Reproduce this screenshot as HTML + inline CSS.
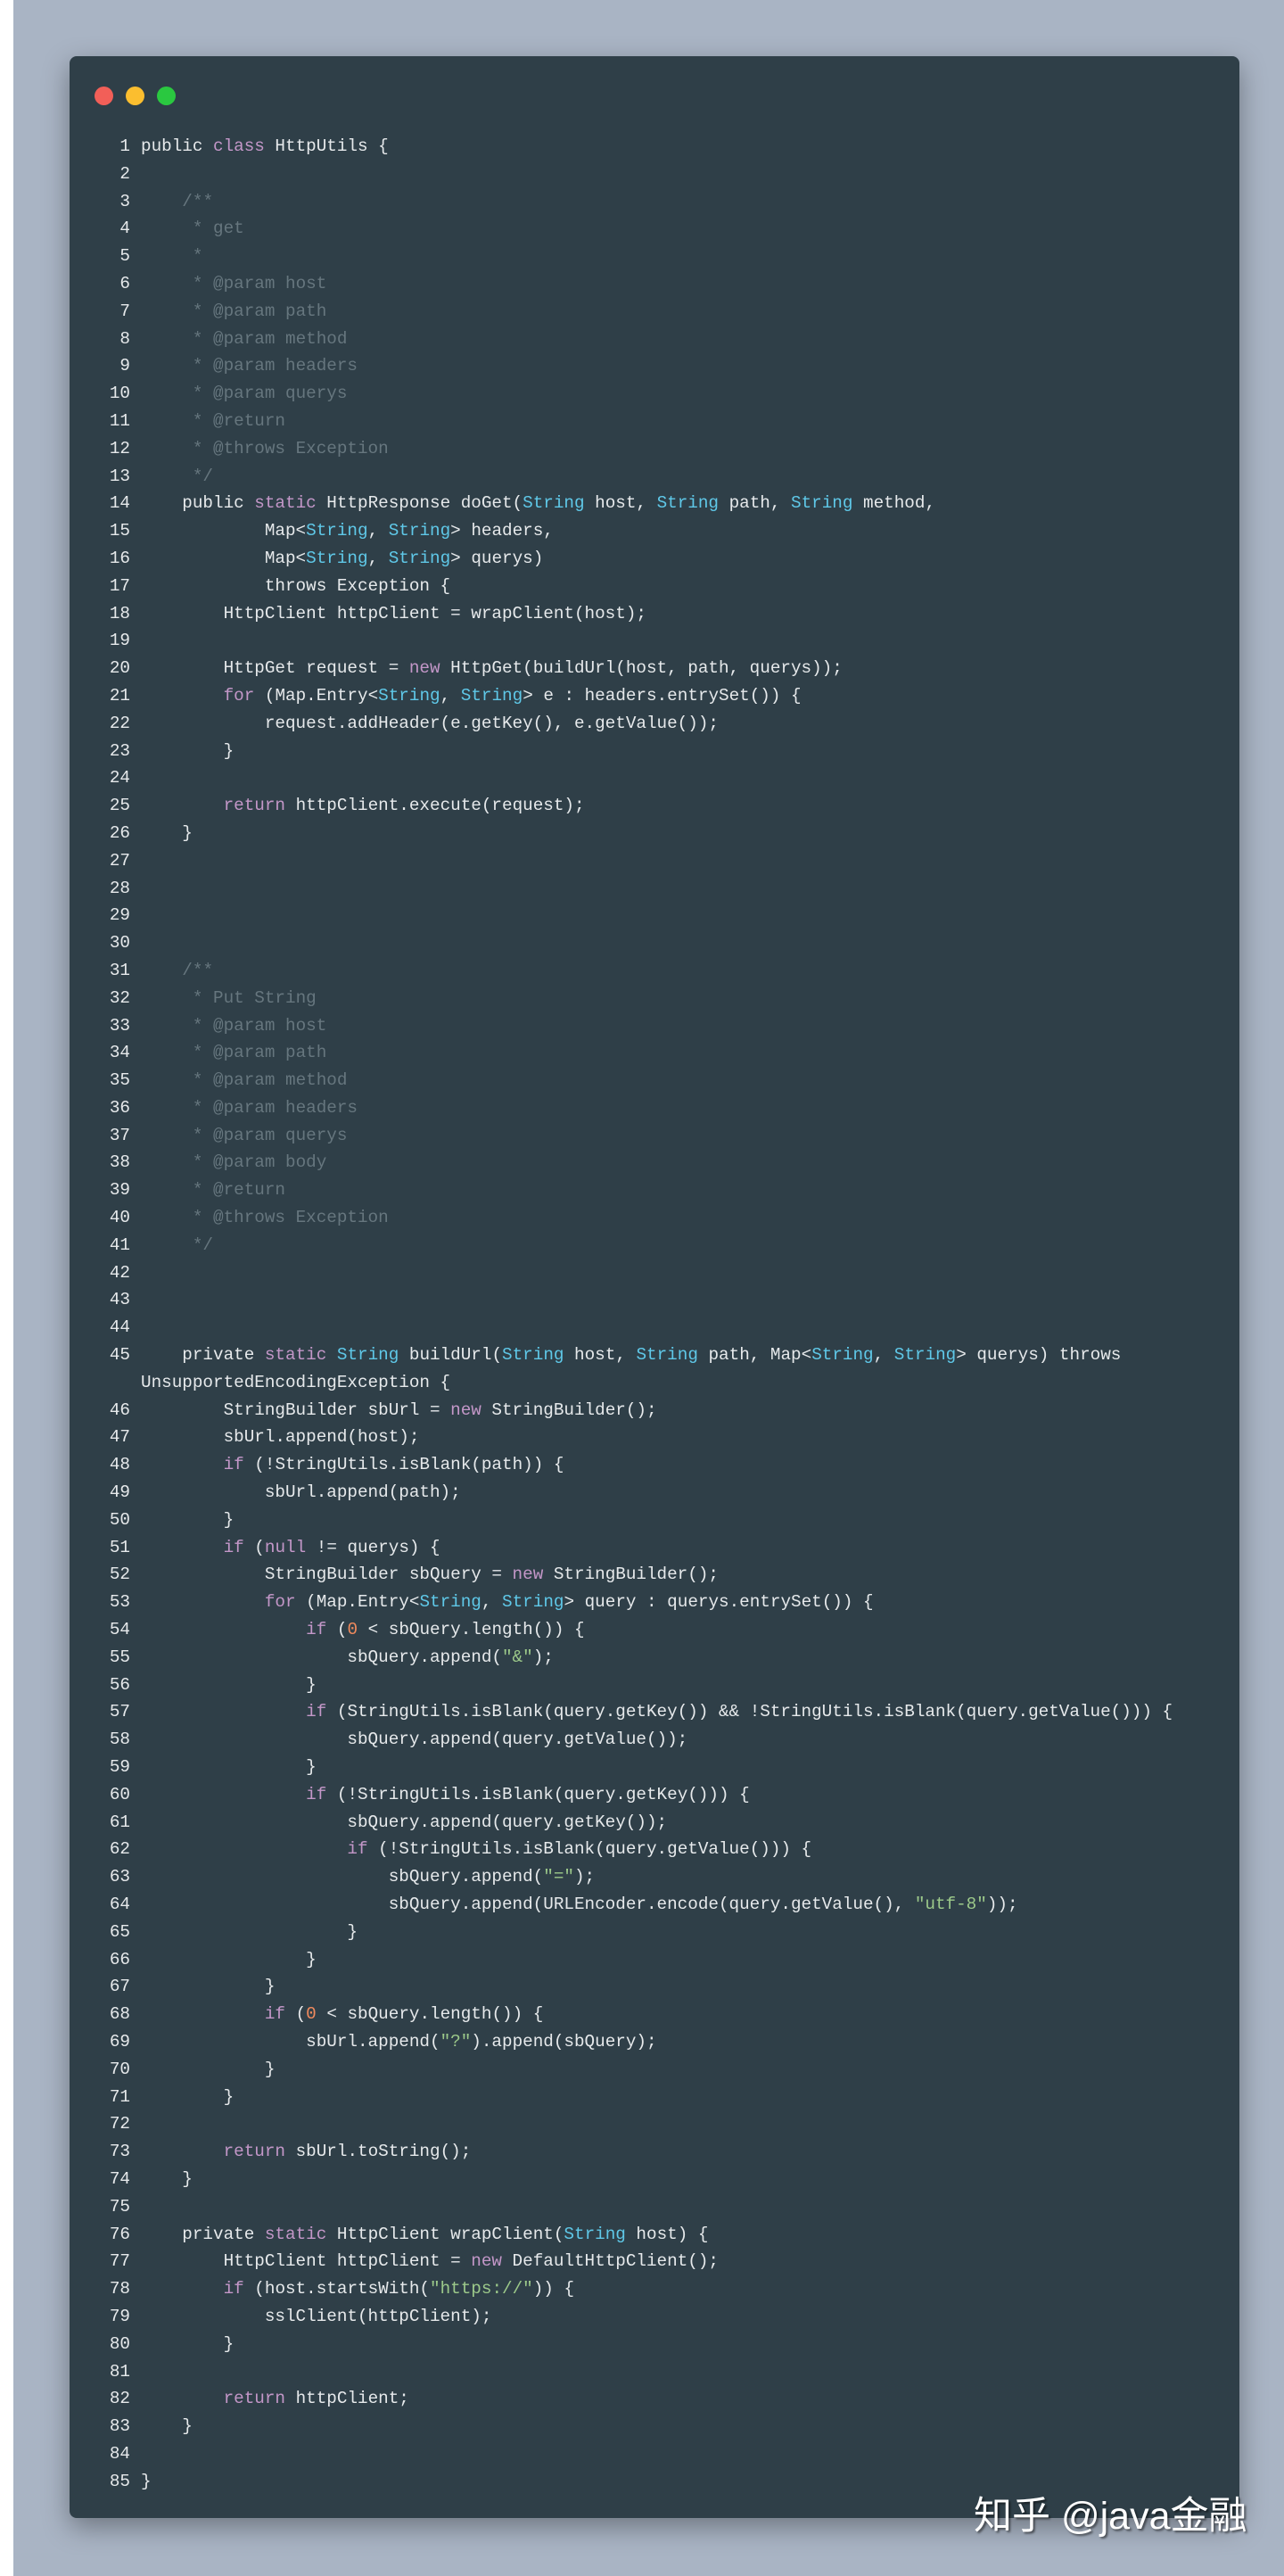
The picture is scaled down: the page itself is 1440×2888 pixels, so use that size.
<!DOCTYPE html>
<html><head><meta charset="utf-8"><style>
html,body{margin:0;padding:0}
body{width:1440px;height:2888px;background:#a9b4c4;position:relative;overflow:hidden}
.strip{position:absolute;left:0;top:0;width:15px;height:2888px;background:#fff}
.card{position:absolute;left:78px;top:63px;width:1312px;height:2760px;background:#2f3f48;border-radius:8px;box-shadow:0 10px 30px rgba(0,0,0,.35)}
.dot{position:absolute;top:97px;width:21px;height:21px;border-radius:50%}
pre{position:absolute;left:100px;top:149px;margin:0;font-family:"Liberation Mono",monospace;font-size:19.3px;line-height:30.8px;color:#e6e9eb;white-space:pre}
.n{display:inline-block;width:46px;text-align:right;margin-right:12px;color:#e6e9eb}
.k{color:#c397c8}.t{color:#5fc8e8}.c{color:#66767e}.s{color:#9cc98a}.m{color:#f08a5d}
.wm{position:absolute;left:1092px;top:2786px;font-family:"Liberation Sans","Noto Sans CJK SC",sans-serif;font-size:43px;color:#fff;text-shadow:2px 2px 2px rgba(0,0,0,.5)}
</style></head><body>
<div class="strip"></div>
<div class="card"></div>
<div class="dot" style="left:106px;background:#f25f58"></div>
<div class="dot" style="left:141px;background:#fbbe2f"></div>
<div class="dot" style="left:176px;background:#2ac840"></div>
<pre><span class="n">1</span>public <span class="k">class</span> HttpUtils {
<span class="n">2</span>
<span class="n">3</span>    <span class="c">/**</span>
<span class="n">4</span>     <span class="c">* get</span>
<span class="n">5</span>     <span class="c">*</span>
<span class="n">6</span>     <span class="c">* @param host</span>
<span class="n">7</span>     <span class="c">* @param path</span>
<span class="n">8</span>     <span class="c">* @param method</span>
<span class="n">9</span>     <span class="c">* @param headers</span>
<span class="n">10</span>     <span class="c">* @param querys</span>
<span class="n">11</span>     <span class="c">* @return</span>
<span class="n">12</span>     <span class="c">* @throws Exception</span>
<span class="n">13</span>     <span class="c">*/</span>
<span class="n">14</span>    public <span class="k">static</span> HttpResponse doGet(<span class="t">String</span> host, <span class="t">String</span> path, <span class="t">String</span> method,
<span class="n">15</span>            Map&lt;<span class="t">String</span>, <span class="t">String</span>&gt; headers,
<span class="n">16</span>            Map&lt;<span class="t">String</span>, <span class="t">String</span>&gt; querys)
<span class="n">17</span>            throws Exception {
<span class="n">18</span>        HttpClient httpClient = wrapClient(host);
<span class="n">19</span>
<span class="n">20</span>        HttpGet request = <span class="k">new</span> HttpGet(buildUrl(host, path, querys));
<span class="n">21</span>        <span class="k">for</span> (Map.Entry&lt;<span class="t">String</span>, <span class="t">String</span>&gt; e : headers.entrySet()) {
<span class="n">22</span>            request.addHeader(e.getKey(), e.getValue());
<span class="n">23</span>        }
<span class="n">24</span>
<span class="n">25</span>        <span class="k">return</span> httpClient.execute(request);
<span class="n">26</span>    }
<span class="n">27</span>
<span class="n">28</span>
<span class="n">29</span>
<span class="n">30</span>
<span class="n">31</span>    <span class="c">/**</span>
<span class="n">32</span>     <span class="c">* Put String</span>
<span class="n">33</span>     <span class="c">* @param host</span>
<span class="n">34</span>     <span class="c">* @param path</span>
<span class="n">35</span>     <span class="c">* @param method</span>
<span class="n">36</span>     <span class="c">* @param headers</span>
<span class="n">37</span>     <span class="c">* @param querys</span>
<span class="n">38</span>     <span class="c">* @param body</span>
<span class="n">39</span>     <span class="c">* @return</span>
<span class="n">40</span>     <span class="c">* @throws Exception</span>
<span class="n">41</span>     <span class="c">*/</span>
<span class="n">42</span>
<span class="n">43</span>
<span class="n">44</span>
<span class="n">45</span>    private <span class="k">static</span> <span class="t">String</span> buildUrl(<span class="t">String</span> host, <span class="t">String</span> path, Map&lt;<span class="t">String</span>, <span class="t">String</span>&gt; querys) throws
<span class="n"></span>UnsupportedEncodingException {
<span class="n">46</span>        StringBuilder sbUrl = <span class="k">new</span> StringBuilder();
<span class="n">47</span>        sbUrl.append(host);
<span class="n">48</span>        <span class="k">if</span> (!StringUtils.isBlank(path)) {
<span class="n">49</span>            sbUrl.append(path);
<span class="n">50</span>        }
<span class="n">51</span>        <span class="k">if</span> (<span class="k">null</span> != querys) {
<span class="n">52</span>            StringBuilder sbQuery = <span class="k">new</span> StringBuilder();
<span class="n">53</span>            <span class="k">for</span> (Map.Entry&lt;<span class="t">String</span>, <span class="t">String</span>&gt; query : querys.entrySet()) {
<span class="n">54</span>                <span class="k">if</span> (<span class="m">0</span> &lt; sbQuery.length()) {
<span class="n">55</span>                    sbQuery.append(<span class="s">"&amp;"</span>);
<span class="n">56</span>                }
<span class="n">57</span>                <span class="k">if</span> (StringUtils.isBlank(query.getKey()) &amp;&amp; !StringUtils.isBlank(query.getValue())) {
<span class="n">58</span>                    sbQuery.append(query.getValue());
<span class="n">59</span>                }
<span class="n">60</span>                <span class="k">if</span> (!StringUtils.isBlank(query.getKey())) {
<span class="n">61</span>                    sbQuery.append(query.getKey());
<span class="n">62</span>                    <span class="k">if</span> (!StringUtils.isBlank(query.getValue())) {
<span class="n">63</span>                        sbQuery.append(<span class="s">"="</span>);
<span class="n">64</span>                        sbQuery.append(URLEncoder.encode(query.getValue(), <span class="s">"utf-8"</span>));
<span class="n">65</span>                    }
<span class="n">66</span>                }
<span class="n">67</span>            }
<span class="n">68</span>            <span class="k">if</span> (<span class="m">0</span> &lt; sbQuery.length()) {
<span class="n">69</span>                sbUrl.append(<span class="s">"?"</span>).append(sbQuery);
<span class="n">70</span>            }
<span class="n">71</span>        }
<span class="n">72</span>
<span class="n">73</span>        <span class="k">return</span> sbUrl.toString();
<span class="n">74</span>    }
<span class="n">75</span>
<span class="n">76</span>    private <span class="k">static</span> HttpClient wrapClient(<span class="t">String</span> host) {
<span class="n">77</span>        HttpClient httpClient = <span class="k">new</span> DefaultHttpClient();
<span class="n">78</span>        <span class="k">if</span> (host.startsWith(<span class="s">"https://"</span>)) {
<span class="n">79</span>            sslClient(httpClient);
<span class="n">80</span>        }
<span class="n">81</span>
<span class="n">82</span>        <span class="k">return</span> httpClient;
<span class="n">83</span>    }
<span class="n">84</span>
<span class="n">85</span>}</pre>
<div class="wm">知乎 @java金融</div>
</body></html>
